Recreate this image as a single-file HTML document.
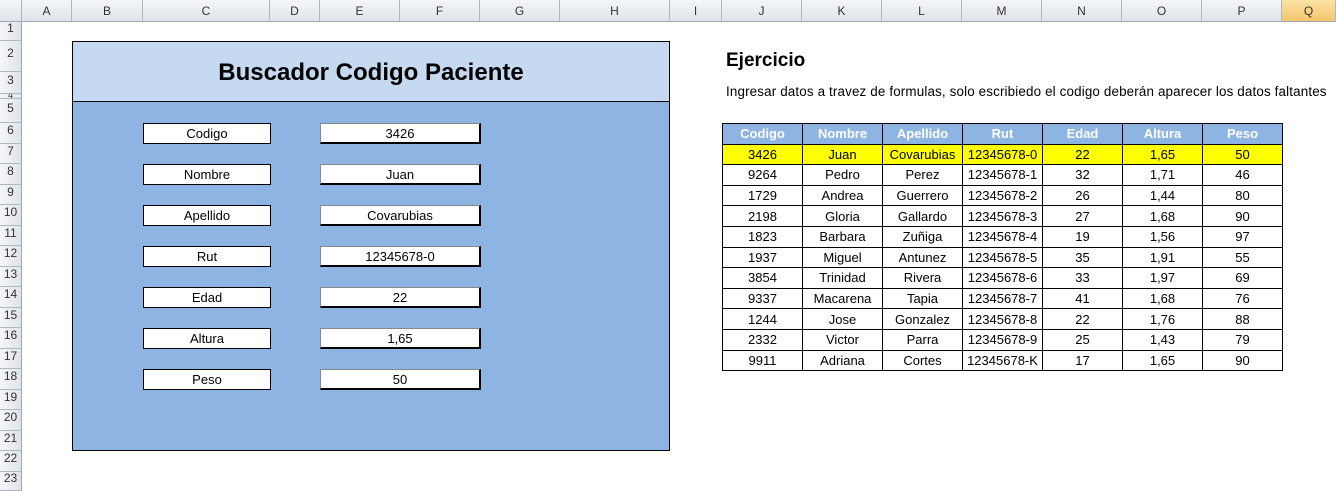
<!DOCTYPE html>
<html><head><meta charset="utf-8"><style>
*{margin:0;padding:0;box-sizing:border-box}
body{width:1336px;height:491px;overflow:hidden;background:#fff;font-family:"Liberation Sans",sans-serif;position:relative;font-size:13px}
.a{position:absolute}
.ch{position:absolute;top:0;height:22px;background:linear-gradient(#f4f6f9,#dfe4ea);border-right:1px solid #b0b7c2;border-bottom:1px solid #9ea7b3;text-align:center;line-height:22px;color:#333;font-size:12px}
.rh{position:absolute;left:0;width:22px;background:linear-gradient(90deg,#f4f6f9,#dfe4ea);border-bottom:1px solid #b0b7c2;border-right:1px solid #9ea7b3;text-align:center;color:#333;font-size:12px;display:flex;align-items:flex-end;justify-content:center;overflow:hidden}
.lb{position:absolute;left:143px;width:128px;height:21px;background:#fff;border:1px solid #000;text-align:center;line-height:19px;font-size:13px}
.vb{position:absolute;left:320px;width:161px;height:21px;background:#fff;border:1px solid #888;border-right:2px solid #000;border-bottom:2px solid #000;text-align:center;line-height:19px;font-size:13px}
table{position:absolute;left:722px;top:123px;border-collapse:collapse}
td{width:80px;height:20.6px;border:1px solid #000;text-align:center;font-size:13px;padding:0}
tr.h td{background:#8db4e2;color:#fff;font-weight:bold}
tr.y td{background:#ffff00}
</style></head><body>
<div id="g"></div>
<div class="a" style="left:72px;top:41px;width:598px;height:410px;background:#8db4e2;border:1px solid #000"></div>
<div class="a" style="left:72px;top:41px;width:598px;height:61px;background:#c5d9f1;border:1px solid #000;text-align:center;line-height:62px;font-size:24px;font-weight:bold">Buscador Codigo Paciente</div>
<div class="lb" style="top:123px">Codigo</div><div class="vb" style="top:123px">3426</div>
<div class="lb" style="top:164px">Nombre</div><div class="vb" style="top:164px">Juan</div>
<div class="lb" style="top:205px">Apellido</div><div class="vb" style="top:205px">Covarubias</div>
<div class="lb" style="top:246px">Rut</div><div class="vb" style="top:246px">12345678-0</div>
<div class="lb" style="top:287px">Edad</div><div class="vb" style="top:287px">22</div>
<div class="lb" style="top:328px">Altura</div><div class="vb" style="top:328px">1,65</div>
<div class="lb" style="top:369px">Peso</div><div class="vb" style="top:369px">50</div>
<div class="a" style="left:726px;top:50px;font-size:19px;font-weight:bold">Ejercicio</div>
<div class="a" style="left:726px;top:84px;font-size:13.4px;white-space:nowrap;letter-spacing:0.15px">Ingresar datos a travez de formulas, solo escribiedo el codigo deberán aparecer los datos faltantes</div>
<table>
<tr class="h"><td>Codigo</td><td>Nombre</td><td>Apellido</td><td>Rut</td><td>Edad</td><td>Altura</td><td>Peso</td></tr>
<tr class="y"><td>3426</td><td>Juan</td><td>Covarubias</td><td>12345678-0</td><td>22</td><td>1,65</td><td>50</td></tr>
<tr><td>9264</td><td>Pedro</td><td>Perez</td><td>12345678-1</td><td>32</td><td>1,71</td><td>46</td></tr>
<tr><td>1729</td><td>Andrea</td><td>Guerrero</td><td>12345678-2</td><td>26</td><td>1,44</td><td>80</td></tr>
<tr><td>2198</td><td>Gloria</td><td>Gallardo</td><td>12345678-3</td><td>27</td><td>1,68</td><td>90</td></tr>
<tr><td>1823</td><td>Barbara</td><td>Zuñiga</td><td>12345678-4</td><td>19</td><td>1,56</td><td>97</td></tr>
<tr><td>1937</td><td>Miguel</td><td>Antunez</td><td>12345678-5</td><td>35</td><td>1,91</td><td>55</td></tr>
<tr><td>3854</td><td>Trinidad</td><td>Rivera</td><td>12345678-6</td><td>33</td><td>1,97</td><td>69</td></tr>
<tr><td>9337</td><td>Macarena</td><td>Tapia</td><td>12345678-7</td><td>41</td><td>1,68</td><td>76</td></tr>
<tr><td>1244</td><td>Jose</td><td>Gonzalez</td><td>12345678-8</td><td>22</td><td>1,76</td><td>88</td></tr>
<tr><td>2332</td><td>Victor</td><td>Parra</td><td>12345678-9</td><td>25</td><td>1,43</td><td>79</td></tr>
<tr><td>9911</td><td>Adriana</td><td>Cortes</td><td>12345678-K</td><td>17</td><td>1,65</td><td>90</td></tr>
</table>
<script>
var cols=[["A",22,72],["B",72,143],["C",143,270],["D",270,320],["E",320,400],["F",400,480],["G",480,560],["H",560,670],["I",670,722],["J",722,802],["K",802,882],["L",882,962],["M",962,1042],["N",1042,1122],["O",1122,1202],["P",1202,1282],["Q",1282,1336]];
var rows=[[1,22,41],[2,41,72],[3,72,94],[4,94,99],[5,99,123]];
for(var i=6;i<=23;i++){var t=123+(i-6)*20.5;rows.push([i,t,Math.min(491,t+20.5)]);}
var h="";
h+='<div class="ch" style="left:0;width:22px"></div>';
cols.forEach(function(c){var st=c[0]=="Q"?"background:linear-gradient(#fbe3a6,#f5c56a);":"";h+='<div class="ch" style="left:'+c[1]+'px;width:'+(c[2]-c[1])+'px;'+st+'">'+c[0]+'</div>';});
rows.forEach(function(r){var ht=r[2]-r[1];h+='<div class="rh" style="top:'+r[1]+'px;height:'+ht+'px;line-height:'+ht+'px;'+(ht<10?'font-size:9px;':'padding-bottom:2px;')+'">'+r[0]+'</div>';});
document.getElementById("g").innerHTML=h;
</script>
</body></html>
